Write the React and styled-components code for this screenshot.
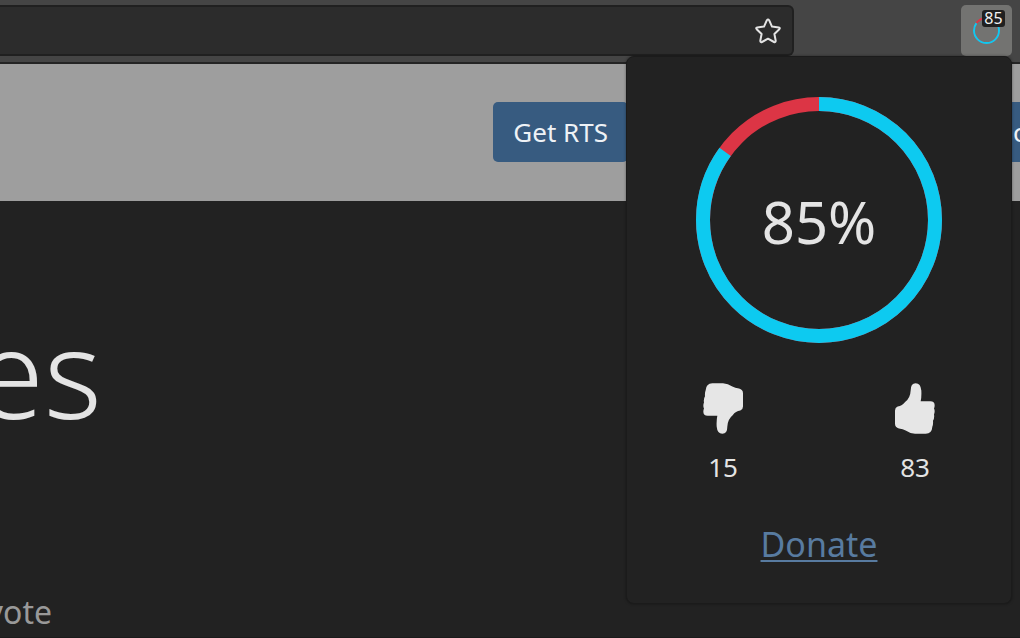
import React from 'react';
import styled, { createGlobalStyle } from 'styled-components';

const GlobalStyle = createGlobalStyle`
  *, *::before, *::after { box-sizing: border-box; }
  body {
    margin: 0;
    background: #222222;
    color: #e4e4e4;
    font-family: "Noto Sans", sans-serif;
  }
  button { font-family: inherit; cursor: pointer; }
`;

const Page = styled.div`
  position: relative;
  display: flex;
  flex-direction: column;
  min-height: 100vh;
  overflow: hidden;
  border-bottom: 1px solid #1b1b1b;
`;

const Toolbar = styled.header`
  display: flex;
  align-items: center;
  justify-content: space-between;
  height: 64px;
  padding: 0 8px 2px 0;
  background: #454545;
  border-bottom: 2px solid #242424;
`;

const AddressBar = styled.div`
  display: flex;
  align-items: center;
  flex: 1;
  height: 51px;
  margin-right: 167px;
  padding-right: 10px;
  background: #2c2c2c;
  border: 2px solid #202020;
  border-left: 0;
  border-radius: 0 6px 6px 0;
`;

const AddressInput = styled.input`
  flex: 1;
  min-width: 0;
  height: 100%;
  border: 0;
  outline: 0;
  background: transparent;
  color: #e4e4e4;
  font: 26px "Noto Sans", sans-serif;
`;

const StarButton = styled.button`
  display: flex;
  padding: 2px 1px 0;
  border: 0;
  background: transparent;
  color: #e4e4e4;
`;

const ExtensionButton = styled.button`
  position: relative;
  display: flex;
  align-items: center;
  justify-content: center;
  width: 51px;
  height: 51px;
  padding: 0;
  border: 0;
  border-radius: 5px;
  background: #737371;
`;

const Badge = styled.span`
  position: absolute;
  top: 5px;
  right: 7px;
  width: 23px;
  border-radius: 3px;
  background: #202020;
  color: #f2f2f2;
  font-size: 16px;
  line-height: 17px;
  text-align: center;
`;

const Banner = styled.nav`
  display: flex;
  align-items: center;
  justify-content: flex-end;
  gap: 344px;
  height: 137px;
  padding-bottom: 1px;
  background: #9e9e9e;
`;

const BannerButton = styled.button`
  flex: none;
  height: 60px;
  padding: 0 20px;
  border: 0;
  border-radius: 5px;
  background: #375b80;
  color: #eef2f6;
  font-size: 26px;
  white-space: nowrap;
`;

const ClippedButton = styled(BannerButton)`
  width: 48px;
  padding: 0 0 0 41px;
  border-radius: 5px 0 0 5px;
  overflow: hidden;
  text-align: left;
`;

const Content = styled.main`
  display: flex;
  flex-direction: column;
  align-items: flex-start;
  padding-top: 90px;
`;

const Clip = styled.div`
  display: flex;
  justify-content: flex-end;
  width: ${(p) => p.$width}px;
  overflow: hidden;
`;

const Title = styled.h1`
  margin: 0;
  font-size: 124px;
  font-weight: 300;
  line-height: 160px;
`;

const Note = styled.p`
  margin: 139px 0 0;
  color: #999999;
  font-size: 32px;
  line-height: 44px;
`;

const Popup = styled.aside`
  position: absolute;
  top: 56px;
  right: 8px;
  display: flex;
  flex-direction: column;
  align-items: center;
  width: 386px;
  padding: 40px 0 35px;
  background: #222222;
  border: 1px solid #1b1b1b;
  border-radius: 8px;
  box-shadow: 0 0 3px rgba(0, 0, 0, 0.4);
`;

const Gauge = styled.div`
  display: grid;
  place-items: center;
  > * { grid-area: 1 / 1; }
`;

const Percent = styled.span`
  padding-top: 4px;
  font-size: 58px;
  line-height: 72px;
`;

const Votes = styled.div`
  display: flex;
  align-self: stretch;
  margin-top: 40px;
`;

const Vote = styled.div`
  display: flex;
  flex: 1;
  flex-direction: column;
  align-items: center;
  gap: 15px;
  font-size: 26px;
  line-height: 36px;
`;

const VoteButton = styled.button`
  display: flex;
  padding: 0;
  border: 0;
  background: transparent;
  color: #e6e6e6;
`;

const DonateLink = styled.a`
  margin-top: 35px;
  color: #587ba0;
  font-size: 34px;
  line-height: 48px;
  text-decoration: underline;
  text-decoration-thickness: 2px;
  text-underline-offset: 3px;
  text-decoration-skip-ink: none;
`;

function Ring({ size, stroke, value }) {
  const r = (size - stroke) / 2;
  const c = size / 2;
  return (
    <svg width={size} height={size} viewBox={`0 0 ${size} ${size}`} fill="none" strokeWidth={stroke} aria-hidden="true">
      <g transform={`rotate(-90 ${c} ${c})`}>
        <circle cx={c} cy={c} r={r} stroke="#dc3545" />
        <circle cx={c} cy={c} r={r} stroke="#0dcaf0" pathLength="100" strokeDasharray={`${value} 100`} />
      </g>
    </svg>
  );
}

function Star() {
  return (
    <svg width="26" height="26" viewBox="0 0 26 26" fill="none" stroke="currentColor" strokeWidth="2" strokeLinejoin="round" aria-hidden="true">
      <path d="M11.9 2.2Q13 .6 14.1 2.2L17 8.6L23.8 9.4Q25.5 9.8 24.3 11.2L19.4 16L20.7 22.8Q20.7 24.7 19 24L13 20.7L7 24Q5.3 24.7 5.3 22.8L6.6 16L1.7 11.2Q.5 9.8 2.2 9.4L9 8.6Z" />
    </svg>
  );
}

function Thumb({ down }) {
  return (
    <svg width="40" height="51" viewBox="0 0 120 152" fill="currentColor" aria-hidden="true">
      <path
        transform={down ? 'rotate(180 60 76)' : undefined}
        d="M0 82Q0 73 8 70Q22 68 31 56Q46 44 47 22Q47 0 62 0Q77 0 79 22Q80 40 77 54H106Q119 54 119 66Q119 72 117 76Q121 84 117 94Q119 105 114 113Q115 124 112 131Q111 151 92 152H60Q45 151 32 142Q24 137 12 136Q0 133 0 122Z"
      />
    </svg>
  );
}

export default function App() {
  return (
    <>
      <GlobalStyle />
      <Page>
        <Toolbar>
          <AddressBar>
            <AddressInput type="text" aria-label="Address" />
            <StarButton type="button" aria-label="Bookmark"><Star /></StarButton>
          </AddressBar>
          <ExtensionButton type="button">
            <Ring size={27} stroke={2} value={85} />
            <Badge>85</Badge>
          </ExtensionButton>
        </Toolbar>
        <Banner>
          <BannerButton type="button">Get RTS</BannerButton>
          <ClippedButton type="button">c</ClippedButton>
        </Banner>
        <Content>
          <Clip $width={102}><Title>es</Title></Clip>
          <Clip $width={52}><Note>vote</Note></Clip>
        </Content>
        <Popup>
          <Gauge>
            <Ring size={246} stroke={14} value={85} />
            <Percent>85%</Percent>
          </Gauge>
          <Votes>
            <Vote>
              <VoteButton type="button" aria-label="Dislike"><Thumb down /></VoteButton>
              <span>15</span>
            </Vote>
            <Vote>
              <VoteButton type="button" aria-label="Like"><Thumb /></VoteButton>
              <span>83</span>
            </Vote>
          </Votes>
          <DonateLink href="#donate">Donate</DonateLink>
        </Popup>
      </Page>
    </>
  );
}
